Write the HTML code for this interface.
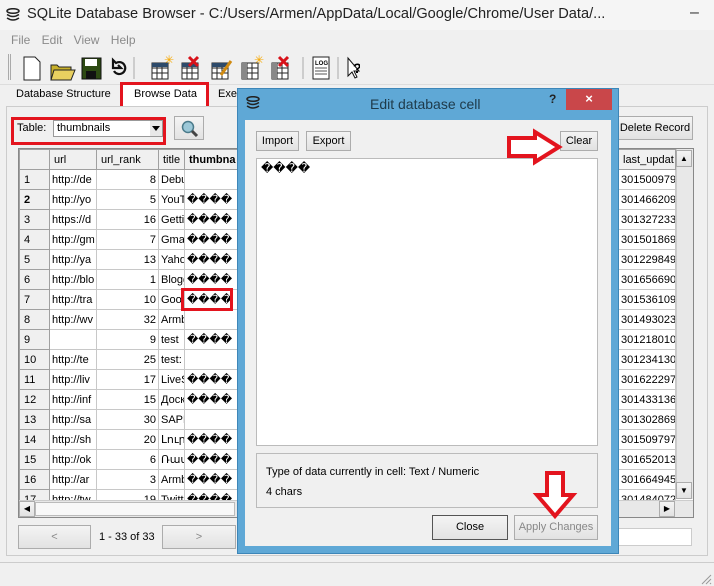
<!DOCTYPE html>
<html><head><meta charset="utf-8"><style>
*{box-sizing:border-box;margin:0;padding:0}
body{width:714px;height:586px;overflow:hidden;background:#f0f0f0;font-family:"Liberation Sans","DejaVu Sans",sans-serif;font-size:12px;color:#000;position:relative}
.a{position:absolute}
.btn{position:absolute;background:linear-gradient(#f4f4f4,#e2e2e2);border:1px solid #acacac;text-align:center;font-size:11px;line-height:18px}
.red{position:absolute;border:3px solid #e3141e}
table{border-collapse:collapse;table-layout:fixed;font-size:11px}
td{height:20px;border:1px solid #c8c8c8;background:#fff;white-space:nowrap;overflow:hidden;padding:0 2px}
td.n{background:#f0f0f0;border:1px solid #a0a0a0;padding-left:4px}
td.r{text-align:right}
th{height:20px;background:#f0f0f0;border:1px solid #a0a0a0;font-weight:normal;text-align:left;padding-left:4px;white-space:nowrap;overflow:hidden}
</style></head><body>
<div class="a" style="left:0;top:0;width:714px;height:30px;background:#f5f5f5"></div>
<svg class="a" style="left:6px;top:8px" width="14" height="13"><ellipse cx="7" cy="3" rx="6" ry="2.3" fill="none" stroke="#222" stroke-width="1.5"/><path d="M1 6.5q6 4 12 0M1 10q6 4 12 0" fill="none" stroke="#222" stroke-width="1.5"/></svg>
<div class="a" style="left:27px;top:6px;font-size:14.6px;color:#222">SQLite Database Browser - C:/Users/Armen/AppData/Local/Google/Chrome/User Data/...</div>
<div class="a" style="left:690px;top:4px;font-size:16px;color:#333">–</div>
<div class="a" style="left:0;top:30px;width:714px;height:20px;background:#f0f0f0"></div>
<div class="a" style="left:11px;top:33px;color:#8a8a8a;font-size:12px;word-spacing:8px">File Edit View Help</div>
<div class="a" style="left:8px;top:54px;width:3px;height:26px;border-left:1px solid #aaa;border-right:1px solid #aaa"></div>
<svg class="a" style="left:20px;top:55px" width="340" height="27">
<path d="M4 2h11l5 5v18H4z" fill="#fff" stroke="#222"/>
<path d="M31 10h6l2 2h12v13H31z" fill="#c8b02a" stroke="#222"/><path d="M34 15h21l-4 10H31z" fill="#e8d060" stroke="#222"/>
<rect x="62" y="3" width="19" height="21" fill="#2d4a12" stroke="#111"/><rect x="65" y="4" width="12" height="7" fill="#fff"/><rect x="66" y="16" width="10" height="8" fill="#111"/>
<path d="M94 16a6 6 0 1 0 2-8l-3-3v8h8l-3-3" fill="none" stroke="#111" stroke-width="2.2"/>
<line x1="114" y1="2" x2="114" y2="24" stroke="#aaa"/>
<g fill="#fff" stroke="#222"><rect x="132" y="8" width="16" height="16"/><rect x="162" y="8" width="16" height="16"/><rect x="192" y="8" width="16" height="16"/><rect x="222" y="8" width="16" height="16"/><rect x="252" y="8" width="16" height="16"/></g>
<g stroke="#222"><path d="M132 13h16M132 18h16M137 8v16M142 8v16M162 13h16M162 18h16M167 8v16M172 8v16M192 13h16M192 18h16M197 8v16M202 8v16M222 13h16M222 18h16M227 8v16M232 8v16M252 13h16M252 18h16M257 8v16M262 8v16"/></g>
<rect x="132" y="8" width="16" height="4" fill="#2d4a6a"/><rect x="162" y="8" width="16" height="4" fill="#2d4a6a"/><rect x="192" y="8" width="16" height="4" fill="#2d4a6a"/><rect x="222" y="8" width="5" height="16" fill="#888"/><rect x="252" y="8" width="5" height="16" fill="#888"/>
<text x="144" y="9" fill="#f6a800" font-size="12">✳</text><text x="234" y="9" fill="#f6a800" font-size="12">✳</text>
<path d="M169 2l9 9M178 2l-9 9M259 2l9 9M268 2l-9 9" stroke="#d8121a" stroke-width="3"/>
<path d="M201 20l10-14" stroke="#d08a10" stroke-width="3"/>
<line x1="283" y1="2" x2="283" y2="24" stroke="#aaa"/>
<rect x="293" y="2" width="16" height="22" fill="#fff" stroke="#222"/><text x="295" y="10" font-size="6" font-weight="bold">LOG</text><path d="M295 13h12M295 16h12M295 19h12" stroke="#555"/>
<line x1="318" y1="2" x2="318" y2="24" stroke="#aaa"/>
<path d="M328 3v18l4-4 3 6 2-1-3-6h5z" fill="#fff" stroke="#111"/><text x="333" y="18" font-size="14" font-weight="bold">?</text>
</svg>
<div class="a" style="left:0;top:84px;width:714px;height:1px;background:#ddd"></div>
<div class="a" style="left:16px;top:88px;font-size:11px">Database Structure</div>
<div class="a" style="left:121px;top:82px;width:88px;height:26px;background:#fff;border:1px solid #ccc"></div>
<div class="a" style="left:134px;top:88px;font-size:11px">Browse Data</div>
<div class="a" style="left:218px;top:88px;font-size:11px">Exe</div>
<div class="red" style="left:120px;top:82px;width:89px;height:28px"></div>
<div class="a" style="left:6px;top:106px;width:702px;height:450px;border:1px solid #ccc;background:#f0f0f0"></div>
<div class="a" style="left:17px;top:122px;font-size:11px">Table:</div>
<div class="a" style="left:53px;top:120px;width:110px;height:17px;background:#fff;border:1px solid #999;font-size:11px;padding-left:3px;line-height:15px">thumbnails</div>
<div class="a" style="left:150px;top:121px;width:12px;height:15px;background:#e8e8e8"></div>
<div class="a" style="left:152px;top:126px;border:4px solid transparent;border-top:5px solid #000"></div>
<div class="red" style="left:11px;top:117px;width:155px;height:28px"></div>
<div class="btn" style="left:174px;top:116px;width:30px;height:24px"></div>
<svg class="a" style="left:180px;top:119px" width="20" height="18"><circle cx="8" cy="8" r="5.5" fill="#9cc8d8" stroke="#4a7a8a" stroke-width="1.5"/><path d="M12 12l5 5" stroke="#444" stroke-width="3"/></svg>
<div class="btn" style="left:617px;top:116px;width:76px;height:24px;line-height:22px">Delete Record</div>
<div class="a" style="left:18px;top:148px;width:676px;height:370px;border:1px solid #888;background:#fff;overflow:hidden">
<table style="width:220px;position:absolute;left:0;top:0">
<colgroup><col style="width:30px"><col style="width:47px"><col style="width:62px"><col style="width:26px"><col style="width:60px"></colgroup>
<tr><th></th><th>url</th><th>url_rank</th><th>title</th><th style="font-weight:bold">thumbna</th></tr>
<tr><td class="n">1</td><td>http://de</td><td class="r">8</td><td>Debu</td><td></td></tr>
<tr><td class="n" style="font-weight:bold">2</td><td>http://yo</td><td class="r">5</td><td>YouT</td><td>����</td></tr>
<tr><td class="n">3</td><td>https://d</td><td class="r">16</td><td>Getti</td><td>����</td></tr>
<tr><td class="n">4</td><td>http://gm</td><td class="r">7</td><td>Gmai</td><td>����</td></tr>
<tr><td class="n">5</td><td>http://ya</td><td class="r">13</td><td>Yaho</td><td>����</td></tr>
<tr><td class="n">6</td><td>http://blo</td><td class="r">1</td><td>Blogg</td><td>����</td></tr>
<tr><td class="n">7</td><td>http://tra</td><td class="r">10</td><td>Goog</td><td>����</td></tr>
<tr><td class="n">8</td><td>http://wv</td><td class="r">32</td><td>Armb</td><td></td></tr>
<tr><td class="n">9</td><td></td><td class="r">9</td><td>test</td><td>����</td></tr>
<tr><td class="n">10</td><td>http://te</td><td class="r">25</td><td>test:</td><td></td></tr>
<tr><td class="n">11</td><td>http://liv</td><td class="r">17</td><td>LiveS</td><td>����</td></tr>
<tr><td class="n">12</td><td>http://inf</td><td class="r">15</td><td>Доск</td><td>����</td></tr>
<tr><td class="n">13</td><td>http://sa</td><td class="r">30</td><td>SAPE</td><td></td></tr>
<tr><td class="n">14</td><td>http://sh</td><td class="r">20</td><td>Լուր</td><td>����</td></tr>
<tr><td class="n">15</td><td>http://ok</td><td class="r">6</td><td>Ռամն</td><td>����</td></tr>
<tr><td class="n">16</td><td>http://ar</td><td class="r">3</td><td>Armb</td><td>����</td></tr>
<tr><td class="n">17</td><td>http://tw</td><td class="r">19</td><td>Twitt</td><td>����</td></tr>
</table>
<table style="width:58px;position:absolute;left:599px;top:0">
<tr><th>last_updat</th></tr>
<tr><td>301500979</td></tr><tr><td>301466209</td></tr><tr><td>301327233</td></tr><tr><td>301501869</td></tr><tr><td>301229849</td></tr><tr><td>301656690</td></tr><tr><td>301536109</td></tr><tr><td>301493023</td></tr><tr><td>301218010</td></tr><tr><td>301234130</td></tr><tr><td>301622297</td></tr><tr><td>301433136</td></tr><tr><td>301302869</td></tr><tr><td>301509797</td></tr><tr><td>301652013</td></tr><tr><td>301664945</td></tr><tr><td>301484072</td></tr>
</table>
<div class="a" style="left:657px;top:0;width:17px;height:350px;background:#e8e8e8;border-left:1px solid #ccc"></div>
<div class="btn" style="left:657px;top:1px;width:16px;height:17px;font-size:8px;line-height:15px">▲</div>
<div class="btn" style="left:657px;top:333px;width:16px;height:17px;font-size:8px;line-height:15px">▼</div>
<div class="a" style="left:0;top:351px;width:674px;height:17px;background:#e8e8e8;border-top:1px solid #ccc"></div>
<div class="btn" style="left:0;top:352px;width:16px;height:16px;font-size:8px;line-height:14px">◀</div>
<div class="btn" style="left:640px;top:352px;width:16px;height:16px;font-size:8px;line-height:14px">▶</div>
<div class="a" style="left:16px;top:353px;width:200px;height:14px;background:#f8f8f8;border:1px solid #bbb"></div>
</div>
<div class="red" style="left:181px;top:288px;width:52px;height:23px"></div>
<div class="btn" style="left:18px;top:525px;width:73px;height:24px;line-height:22px;color:#888">&lt;</div>
<div class="a" style="left:99px;top:531px;font-size:11px">1 - 33 of 33</div>
<div class="btn" style="left:162px;top:525px;width:74px;height:24px;line-height:22px;color:#888">&gt;</div>
<div class="a" style="left:600px;top:528px;width:92px;height:18px;background:#fff;border:1px solid #ccc"></div>
<div class="a" style="left:0;top:562px;width:714px;height:1px;background:#ccc"></div>
<div class="a" style="left:237px;top:88px;width:382px;height:466px;background:#5fa8d6;border:1px solid #3d86b8"></div>
<svg class="a" style="left:246px;top:96px" width="14" height="13"><ellipse cx="7" cy="3" rx="6" ry="2.3" fill="none" stroke="#222" stroke-width="1.5"/><path d="M1 6.5q6 4 12 0M1 10q6 4 12 0" fill="none" stroke="#222" stroke-width="1.5"/></svg>
<div class="a" style="left:370px;top:96px;font-size:14px;color:#1e3a4a">Edit database cell</div>
<div class="a" style="left:549px;top:92px;font-size:12px;font-weight:bold;color:#222">?</div>
<div class="a" style="left:566px;top:89px;width:46px;height:21px;background:#c9474a;color:#fff;text-align:center;font-size:13px;line-height:20px;font-weight:bold">×</div>
<div class="a" style="left:245px;top:120px;width:366px;height:426px;background:#f0f0f0"></div>
<div class="btn" style="left:256px;top:131px;width:43px;height:20px">Import</div>
<div class="btn" style="left:306px;top:131px;width:45px;height:20px">Export</div>
<div class="btn" style="left:560px;top:131px;width:38px;height:20px">Clear</div>
<div class="a" style="left:256px;top:158px;width:342px;height:288px;background:#fff;border:1px solid #bbb"></div>
<div class="a" style="left:261px;top:161px;font-size:12px">����</div>
<div class="a" style="left:256px;top:453px;width:342px;height:55px;border:1px solid #bbb"></div>
<div class="a" style="left:266px;top:466px;font-size:11px">Type of data currently in cell: Text / Numeric</div>
<div class="a" style="left:266px;top:486px;font-size:11px">4 chars</div>
<div class="btn" style="left:432px;top:515px;width:76px;height:25px;line-height:23px;border-color:#555">Close</div>
<div class="btn" style="left:514px;top:515px;width:84px;height:25px;line-height:23px;color:#888">Apply Changes</div>
<svg class="a" style="left:505px;top:128px" width="60" height="40"><path d="M4 10h26V4l24 15-24 15v-6H4z" fill="#fff" stroke="#e3141e" stroke-width="4"/></svg>
<svg class="a" style="left:530px;top:470px" width="50" height="50"><path d="M17 3h16v22h10L25 46 7 25h10z" fill="#fff" stroke="#e3141e" stroke-width="4"/></svg>
<svg class="a" style="left:700px;top:573px" width="12" height="12"><path d="M2 11l9-9M6 11l5-5M10 11l1-1" stroke="#999"/></svg>
</body></html>
